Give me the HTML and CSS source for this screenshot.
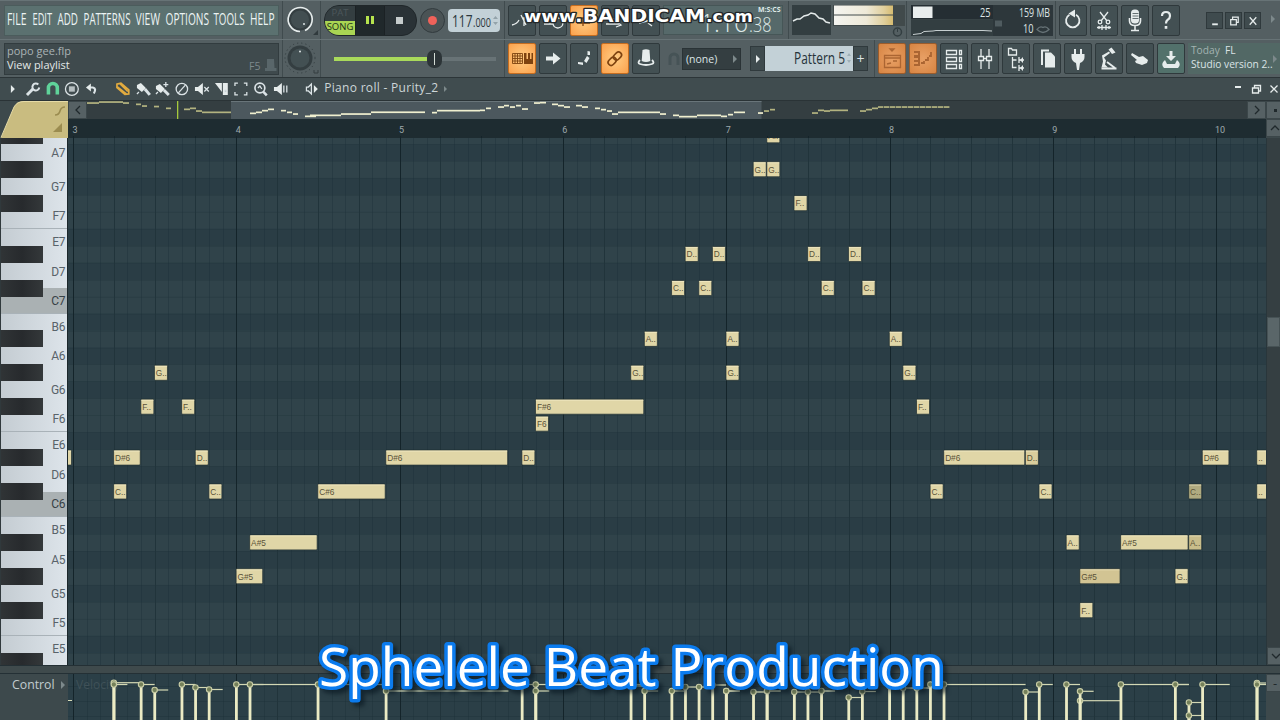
FILE: index.html
```html
<!DOCTYPE html>
<html lang="en">

<head>
    <meta charset="UTF-8">
    <meta name="viewport" content="width=device-width, initial-scale=1.0">
    <title>Piano roll - Purity_2</title>
    <link rel="stylesheet" href="styles.css">
</head>

<body>
    <div class="app">
        <div class="toolbar">
            <div class="bar">
                <div class="cell cell-left">
                    <svg class="menu" width="275" height="31" viewBox="5 4 275 31">
                        <text x="8" y="24" textLength="19.5" lengthAdjust="spacingAndGlyphs">FILE</text>
                        <text x="33.5" y="24" textLength="19.5" lengthAdjust="spacingAndGlyphs">EDIT</text>
                        <text x="58.5" y="24" textLength="20.5" lengthAdjust="spacingAndGlyphs">ADD</text>
                        <text x="84.5" y="24" textLength="47" lengthAdjust="spacingAndGlyphs">PATTERNS</text>
                        <text x="136.5" y="24" textLength="24.5" lengthAdjust="spacingAndGlyphs">VIEW</text>
                        <text x="166.5" y="24" textLength="43.5" lengthAdjust="spacingAndGlyphs">OPTIONS</text>
                        <text x="214.5" y="24" textLength="31" lengthAdjust="spacingAndGlyphs">TOOLS</text>
                        <text x="251" y="24" textLength="24.5" lengthAdjust="spacingAndGlyphs">HELP</text>
                    </svg>
                </div>
                <div class="cell cell-knob">
                    <svg width="36" height="39" viewBox="0 0 36 39">
                        <circle cx="17" cy="18.500" r="10" fill="#424e51" stroke="#343e41" stroke-width="2" />
                        <path d="M17 30.500A12 12 0 1 1 22 29.500" fill="none" stroke="#e6ecec" stroke-width="1.6" />
                        <circle cx="21" cy="23" r="1" fill="#dde4e4" />
                        <path d="M30 34h5v-5z" fill="#303a3d" />
                    </svg>
                </div>
                <div class="cell cell-transport">
                    <div class="transport">
                        <div class="mode"><span>PAT</span><span class="on">SONG</span></div>
                        <div class="pause"><i></i><i></i></div>
                        <div class="stop"><i></i></div>
                    </div>
                    <div class="record"><i></i></div>
                    <svg class="tempo" width="52" height="23" viewBox="0 0 52 23">
                        <text x="4" y="17.5" font-size="17" textLength="20.5" lengthAdjust="spacingAndGlyphs">117</text>
                        <text x="25" y="17.5" font-size="13" textLength="18" lengthAdjust="spacingAndGlyphs">.000</text>
                        <path d="M45 10l2.500-3 2.500 3zM45 13l2.500 3 2.500-3z" fill="#93a3aa" />
                    </svg>
                </div>
                <div class="cell cell-rec">
                    <div class="btn"><svg viewBox="0 0 28 31"><path d="M4 20q5-1 7-5m2-5l5 10M16 12v9" /></svg></div>
                    <div class="btn"><svg viewBox="0 0 28 31"><path d="M5 19h9a5 5 0 1 0 5-6" /></svg></div>
                    <div class="btn lit"><svg viewBox="0 0 28 31"><path d="M7 13h13M7 18h13M13 13v8" /></svg></div>
                    <div class="btn"><svg viewBox="0 0 28 31"><path d="M5 19h13M9 14h8m-2 2l5 4-5 2" /></svg></div>
                    <div class="btn"><svg viewBox="0 0 28 31"><path d="M7 18l12-3m-3 3l4 3" /></svg></div>
                </div>
                <div class="cell cell-time">
                    <svg class="clock" width="120" height="30" viewBox="664 5 120 30">
                        <text x="701" y="32" font-size="26" textLength="48" lengthAdjust="spacingAndGlyphs">1:16</text>
                        <text x="750" y="32" font-size="21" textLength="22.500" lengthAdjust="spacingAndGlyphs">:38</text>
                        <text x="759" y="11.500" font-size="7" font-weight="bold" textLength="22.500" lengthAdjust="spacingAndGlyphs">M:S:CS</text>
                    </svg>
                </div>
                <div class="cell cell-scope">
                    <svg width="116" height="39" viewBox="789 0 116 39">
                        <rect x="792" y="4" width="39" height="30" fill="#333e41" />
                        <path d="M793 20l4-2 3 0 4-3 4-1 3-2 4 1 4 4 4 1 3 3 4 1" fill="none" stroke="#e4eaea" stroke-width="1.500" />
                        <rect x="833" y="4" width="73" height="21" fill="#414a4b" />
                        <rect x="834" y="4.500" width="59" height="9" fill="url(#peak)" />
                        <rect x="834" y="14.500" width="59" height="9.500" fill="url(#peak)" />
                        <circle cx="897.500" cy="31" r="4" fill="none" stroke="#333e41" stroke-width="1.500" />
                        <path d="M897.500 31v-3" stroke="#333e41" />
                        <defs>
                            <linearGradient id="peak">
                                <stop offset="0" stop-color="#f4f4f0" />
                                <stop offset=".55" stop-color="#eee9d8" />
                                <stop offset=".85" stop-color="#e0cf9c" />
                                <stop offset="1" stop-color="#d6bb70" />
                            </linearGradient>
                        </defs>
                    </svg>
                </div>
                <div class="cell cell-cpu">
                    <svg class="cpu" width="142" height="31" viewBox="911 4.500 142 31">
                        <rect x="911" y="4" width="82" height="15" fill="#252e33" />
                        <rect x="911" y="19" width="82" height="17" fill="#333e41" />
                        <rect x="913" y="6" width="19.500" height="11.500" fill="#e9eded" />
                        <rect x="993" y="4" width="60" height="32" fill="#2d373b" />
                        <path d="M913 34l8-1 3-2 9-.5 3-.5h47l9 .5" fill="none" stroke="#c8d0d1" />
                        <rect x="995" y="20" width="7" height="6" fill="#4f5b5f" />
                        <text x="980" y="16.500" textLength="10.500" lengthAdjust="spacingAndGlyphs">25</text>
                        <text x="1019" y="16.500" textLength="31" lengthAdjust="spacingAndGlyphs">159 MB</text>
                        <text x="1023" y="32.500" textLength="10.500" lengthAdjust="spacingAndGlyphs">10</text>
                        <path d="M1037 29q3-4 6-2 3-2 6 2-6 6-12 0z" fill="none" stroke="#667276" stroke-width="1.300" />
                    </svg>
                </div>
                <div class="cell cell-tools">
                    <div class="btn"><svg viewBox="0 0 28 31"><path d="M10.500 9.800a6.700 6.700 0 1 0 6.500 0" style="stroke-width:1.800" /><path class="f" d="M9.500 8.500l6.500-4v8z" /></svg></div>
                    <div class="btn"><svg viewBox="0 0 28 31"><path d="M10 7l7 9M18 7l-7 9M7 22.500h14" /><circle cx="10" cy="17" r="1.800" /><circle cx="18" cy="17" r="1.800" /><path d="M9 21v3m3-4v5m4-5v5m3-4v3" /></svg></div>
                    <div class="btn"><svg viewBox="0 0 28 31"><rect class="f" x="10" y="4.500" width="8" height="14" rx="3.500" /><path d="M8.500 13v3q0 4.500 5.500 4.500t5.500-4.500v-3M14 21v4M10 25.500h8" style="stroke-width:1.600" /><path d="M11.500 8.500h6M11.500 11h6M11.500 13.500h6" style="stroke:#435053;stroke-width:.8" /></svg></div>
                    <div class="btn"><svg viewBox="0 0 28 31"><path d="M10 11q0-4 4-4t4 4q0 2.500-2.500 4-1.500 1-1.500 3.500" style="stroke-width:2.200" /><rect class="f" x="12.700" y="21" width="2.600" height="2.800" /></svg></div>
                </div>
                <div class="winbtns">
                    <div><svg viewBox="0 0 16 17"><path d="M5 12h6" style="stroke-width:2" /></svg></div>
                    <div><svg viewBox="0 0 16 17"><path d="M4.500 7h6v5.500h-6zM6.500 7V4.500h6V10h-2" /></svg></div>
                    <div><svg viewBox="0 0 16 17"><path d="M4.500 4.500l7 8M11.500 4.500l-7 8" /></svg></div>
                </div>
                <i class="tri"></i>
            </div>

            <div class="bar">
                <div class="cell cell-left">
                    <div class="hint">
                        <div>popo gee.flp</div>
                        <div class="hint-now">View playlist</div>
                        <svg class="hint-key" width="34" height="15" viewBox="0 0 34 15">
                            <text x="3" y="12" font-size="10.500">F5</text>
                            <path d="M21 1h7l.5 9h2v3H19v-3h2z" fill="#59666a" />
                        </svg>
                    </div>
                </div>
                <div class="cell cell-knob">
                    <svg width="36" height="38" viewBox="0 0 36 38">
                        <circle cx="17" cy="18" r="15" fill="none" stroke="#353f42" stroke-dasharray="1.200 3" />
                        <circle cx="17" cy="18" r="12.500" fill="#343e41" />
                        <circle cx="17" cy="18" r="9.500" fill="#435053" />
                        <circle cx="17" cy="11.500" r="1" fill="#dde4e4" />
                        <path d="M31 30v3h4v-3" fill="none" stroke="#343e41" />
                    </svg>
                </div>
                <div class="cell cell-transport">
                    <div class="slider"><i class="fill"></i><i class="thumb"></i></div>
                </div>
                <div class="cell cell-rec">
                    <div class="btn lit"><svg viewBox="0 0 28 31"><path d="M4.500 10.500h10v10h-10zM4.500 13h10M4.500 15.500h10M4.500 18h10M7 10.500v10M9.500 10.500v10M12 10.500v10" style="stroke-width:.9" /><path class="f" d="M16 10h2.500v6H20v-6h2v6h1.500v-6H25v11h-9z" /></svg></div>
                    <div class="btn"><svg viewBox="0 0 28 31"><path class="f" d="M7 13.500h7v-4l7.500 6-7.500 6v-4H7z" /></svg></div>
                    <div class="btn"><svg viewBox="0 0 28 31"><path class="f" d="M8 19l5 .5v2.500L8 21zM14 18l3-5 2.500 2-3 5zM17.500 8l2.500.5V12h-2.500z" /></svg></div>
                    <div class="btn lit"><svg viewBox="0 0 28 31"><g transform="rotate(-45 14 15.500)"><rect x="5.500" y="12.500" width="9" height="6" rx="3" style="stroke-width:1.600" /><rect x="13" y="12.500" width="9" height="6" rx="3" style="stroke-width:1.600" /></g></svg></div>
                    <div class="btn"><svg viewBox="0 0 28 31"><path class="f" d="M10.500 7q3.500-1.500 7 0l.8 11q-4.300 2-8.600 0z" /><path d="M8 17q-3 3 0 4 6 2 12 0 3-1 0-4" style="stroke-width:1.800" /></svg></div>
                </div>
                <div class="cell cell-pattern">
                    <svg class="snap-mag" width="12" height="14" viewBox="0 0 12 14"><path d="M2 13V6a4 4 0 0 1 8 0v7" fill="none" stroke="#465356" stroke-width="3" /></svg>
                    <div class="snap">(none)<i class="tri"></i></div>
                    <div class="picker">
                        <div class="pick-side"><i class="tri"></i></div>
                        <svg class="pick-name" width="88" height="25" viewBox="0 0 88 25">
                            <text x="29" y="18" textLength="51" lengthAdjust="spacingAndGlyphs">Pattern 5</text>
                            <path d="M82 10l2-3 2 3zM82 14l2 3 2-3z" fill="#9fb0b7" />
                        </svg>
                        <div class="pick-side">+</div>
                    </div>
                </div>
                <div class="cell cell-views">
                    <div class="btn lit dim"><svg viewBox="0 0 28 31"><path d="M6.500 12.500h16v12h-16zM6.500 15h16M9 21l4-1m2-2h4M12 6h4l-2 2z" /></svg></div>
                    <div class="btn lit dim"><svg viewBox="0 0 28 31"><path class="f" d="M5 8h6v15H5v-2h4v-2H5v-2h4v-2H5v-3h4v-2H5z" /><path d="M12 20h3v-2m1-1h3v-3m1-1h2V9" style="stroke-width:1.800" /></svg></div>
                    <div class="btn"><svg viewBox="0 0 28 31"><path d="M6.500 7.500h10v4h-10zM6.500 14.500h10v4h-10zM6.500 21.500h10v4h-10zM19.500 7.500h2v4h-2zM19.500 14.500h2v4h-2zM19.500 21.500h2v4h-2z" /></svg></div>
                    <div class="btn"><svg viewBox="0 0 28 31"><path d="M10 6v7M10 18v8M18 6v7M18 18v8M7.500 13.500h5v4h-5zM15.500 13.500h5v4h-5zM12.500 15.500h3" /></svg></div>
                    <div class="btn"><svg viewBox="0 0 28 31"><path d="M6.500 5.500h3l1 1.500h4v5h-8zM10.500 14v10.500h4M10.500 17h4M17 14v6m0 2v6M17 17h5M17 25h5" /><path class="f" d="M18 17l3-3v6zM18 25l3-3v6z" /></svg></div>
                    <div class="btn"><svg viewBox="0 0 28 31"><path class="f" d="M12 9.500h6l4 4v11H12z" /><path d="M9 22V7.500h7" style="stroke-width:2" /></svg></div>
                    <div class="btn"><svg viewBox="0 0 28 31"><path class="f" d="M10 6h2v5h4V6h2v5h2.500v3q0 4-4.500 6l-1 7h-2l-1-7q-4.500-2-4.500-6v-3H10z" /></svg></div>
                    <div class="btn"><svg viewBox="0 0 28 31"><path class="f" d="M13.500 6.500l3-2 4 5-3.500 1.500zM7 12.500l7-4 1 1.500-6 4.500 2 3-1 4 3 3H6.500l1.500-6z" /><path d="M6.500 25.500h15M12 19l8 6" style="stroke-width:1.800" /></svg></div>
                    <div class="btn"><svg viewBox="0 0 28 31"><path class="f" d="M6 10l7 4 4-1 5 4-1 3-5 2-6-2-1-2 2-1-6-5z" /></svg></div>
                    <div class="btn teal"><svg viewBox="0 0 28 31"><path class="f" d="M12.500 8h3v5H19l-5 5-5-5h3.500zM8 17l2 4h8l2-4q5 4 1 8H7q-4-4 1-8z" /></svg></div>
                </div>
                <div class="news">
                    <div><span>Today</span>&nbsp; FL</div>
                    <div>Studio version 2..</div>
                    <i class="tri"></i>
                </div>
            </div>
        </div>

        <div class="titlebar">
            <svg viewBox="0 0 20 20"><path class="f" d="M8 6l4 4-4 4z" /></svg>
            <svg viewBox="0 0 20 20"><path d="M4 16l6-6" style="stroke-width:3" /><path d="M15.500 5.500a3.500 3.500 0 1 0 1 3" style="stroke-width:2" /></svg>
            <svg viewBox="0 0 20 20" class="green"><path d="M5.500 15.500V9a4.500 4.500 0 0 1 9 0v6.500" style="stroke-width:3.600" /></svg>
            <svg viewBox="0 0 20 20"><circle cx="10" cy="10" r="6.500" /><path d="M7 8h6M7 10h6M7 12h6" /></svg>
            <svg viewBox="0 0 20 20"><path d="M8 8.500h3q4 1 1 6" style="stroke-width:2.200" /><path class="f" d="M4 8.500l5-4v8z" /></svg>
            <svg viewBox="0 0 20 20" class="amber first"><path d="M4 5l4-1 8 7v4l-4 .5-8-7zM7 4.500l8 8M4.500 8l9 7" style="stroke-width:1.700" /></svg>
            <svg viewBox="0 0 20 20"><path class="f" d="M4 6l4-2 5 5-4 4-5-4z" /><path d="M12 10l5 6" style="stroke-width:3" /><path d="M4 15l2-2" /></svg>
            <svg viewBox="0 0 20 20"><path class="f" d="M4 7l4-2 5 5-4 4-5-4z" /><path d="M12 11l5 5" style="stroke-width:3" /><path d="M14 3v5M11.500 5.500h5M4 15l2-2" /></svg>
            <svg viewBox="0 0 20 20"><circle cx="10" cy="10" r="5.800" /><path d="M6.500 14l7-8" /></svg>
            <svg viewBox="0 0 20 20"><path class="f" d="M3 8h3l5-4v12l-5-4H3z" /><path d="M12.500 8l4.500 4.500m0-4.500l-4.500 4.500" /></svg>
            <svg viewBox="0 0 20 20"><path class="f" d="M3 4h7v9zM11 4h5v12h-5z" /><circle cx="13.500" cy="12" r="1" fill="#3d494c" /></svg>
            <svg viewBox="0 0 20 20"><path d="M4 7V4h3M13 4h3v3M16 13v3h-3M7 16H4v-3" /></svg>
            <svg viewBox="0 0 20 20"><circle cx="9" cy="9" r="5" style="stroke-width:1.700" /><path d="M12.500 13l3.500 3.500" style="stroke-width:2.600" /><path d="M7 9l2-2 2 3" /></svg>
            <svg viewBox="0 0 20 20"><path class="f" d="M3 8h3l5-4v12l-5-4H3z" /><path d="M13 6.500v7M16 6.500v7" /></svg>
            <svg viewBox="0 0 20 20" class="speaker"><path d="M4.500 8h2l3-3v10l-3-3h-2z" /><path class="f" d="M12 6l4 4-4 4z" /></svg>
            <span class="title">Piano roll - Purity_2</span>
            <i class="tri"></i>
            <div class="title-win">
                <svg viewBox="0 0 16 16"><path d="M5 6h6" style="stroke-width:2" /></svg>
                <svg viewBox="0 0 16 16"><path d="M4.500 7h6v5h-6zM6.500 7V4.500h6V10h-2" /></svg>
                <svg viewBox="0 0 16 16"><path d="M4.500 4.500l7 7M11.500 4.500l-7 7" /></svg>
            </div>
        </div>

        <div class="roll">
            <div class="corner">
                <svg width="68" height="37" viewBox="0 0 68 37">
                    <path d="M1 37Q8 20 14 6 17 0 24 0H68V37z" fill="#c9bc80" />
                    <path d="M1 36.500Q8 20 14 6 17 .5 24 .5H68" fill="none" stroke="#e6dba6" />
                    <path d="M55 14q4 0 5-4t5-4" fill="none" stroke="#9b8c50" stroke-width="1.600" />
                    <path d="M53 31h9v-9z" fill="#9b8c50" />
                </svg>
            </div>
            <div class="overview">
                <div class="sq"><svg width="8" height="12" viewBox="0 0 8 12"><path d="M6 2L2 6l4 4" /></svg></div>
                <svg id="minimap" width="1160" height="18" viewBox="87 101 1160 18"></svg>
                <div class="sq"><svg width="8" height="12" viewBox="0 0 8 12"><path d="M2 2l4 4-4 4" /></svg></div>
            </div>
            <div class="sq"><i class="dot"></i></div>
            <svg id="ruler" width="1198" height="19" viewBox="68 119 1198 19"></svg>
            <div class="sq"><svg width="12" height="10" viewBox="0 0 12 10"><path d="M2 7l4-4 4 4" /></svg></div>
            <div class="keys" id="keys"></div>
            <svg id="grid" width="1198" height="527" viewBox="68 138 1198 527"></svg>
            <div class="vscroll">
                <div class="vthumb"></div>
                <div class="sq"><svg width="12" height="10" viewBox="0 0 12 10"><path d="M2 3l4 4 4-4" /></svg></div>
            </div>
            <div class="splitter"></div>
            <div class="control">Control<i class="tri"></i></div>
            <svg id="velocity" width="1198" height="46" viewBox="68 674 1198 46"></svg>
            <div class="sq">-</div>
        </div>

        <svg class="watermark" width="240" height="26" viewBox="518 3 240 26">
            <text x="524" y="21.500" font-size="16" textLength="52" lengthAdjust="spacingAndGlyphs">www</text>
            <text x="575" y="22" font-size="17.500" textLength="130" lengthAdjust="spacingAndGlyphs">.BANDICAM</text>
            <text x="706" y="22" font-size="15" textLength="47" lengthAdjust="spacingAndGlyphs">.com</text>
        </svg>
        <svg class="caption" width="660" height="86" viewBox="300 634 660 86">
            <text x="319" y="685.500" textLength="625" lengthAdjust="spacingAndGlyphs">Sphelele Beat Production</text>
        </svg>
    </div>

    <script src="script.js"></script>
</body>

</html>
```
FILE: styles.css
```css
* {
    margin: 0;
    padding: 0;
    box-sizing: border-box;
}

body {
    width: 1280px;
    height: 720px;
    overflow: hidden;
    background: #3d494c;
    font-family: 'Open Sans', 'Noto Sans', sans-serif;
    color: #dbe4e5;
}

svg {
    display: block;
}

.app {
    position: relative;
    width: 1280px;
    height: 720px;
    overflow: hidden;
}

/* top toolbar */
.toolbar {
    height: 78px;
    background: #545f62;
    border-bottom: 1px solid #2c3538;
}

.bar {
    display: flex;
    height: 39px;
    border-top: 1px solid #677376;
}

.bar + .bar {
    height: 38px;
}

.cell {
    display: flex;
    align-items: center;
    flex: none;
    border-right: 1px solid #404b4e;
}

.cell-left {
    width: 283px;
    padding-left: 4px;
}

.cell-knob {
    width: 38px;
}

.cell-transport {
    width: 184px;
    padding-left: 3px;
}

.cell-rec {
    width: 157px;
    padding-left: 3px;
    gap: 3px;
    border-right: none;
}

.cell-time {
    width: 127px;
    padding-left: 1px;
}

.cell-scope {
    width: 118px;
}

.cell-cpu {
    width: 149px;
    padding-left: 4px;
}

.cell-tools {
    width: 128px;
    padding-left: 3px;
    gap: 3px;
    border-right: none;
}

.cell-pattern {
    width: 213px;
    padding-left: 5px;
}

.cell-views {
    width: 313px;
    padding-left: 3px;
    gap: 3px;
    border-right: none;
}

.menu {
    background: #5b7170;
    outline: 1px solid #4b5c5c;
    outline-offset: -1px;
    fill: #ecf4f4;
    font-size: 15.5px;
}

.hint {
    position: relative;
    width: 275px;
    height: 32px;
    padding: 0 2px;
    background: #3f4a4d;
    border: 1px solid #323c3f;
    font-size: 11px;
    line-height: 14px;
    color: #aab3b5;
}

.hint-now {
    color: #e2e8e8;
}

.hint-key {
    position: absolute;
    right: -2px;
    bottom: 1px;
    fill: #7d898c;
}

.transport {
    display: flex;
    width: 93px;
    height: 31px;
    border-radius: 15px;
    overflow: hidden;
    background: #2a3236;
    border: 1px solid #20272a;
}

.mode {
    width: 30px;
    display: flex;
    flex-direction: column;
    font-size: 9.5px;
    text-align: center;
    line-height: 14px;
    color: #4c575b;
    background: #343e41;
}

.mode .on {
    flex: 1;
    margin-top: 1px;
    line-height: 12px;
    background: #a9d553;
    color: #20301a;
}

.pause,
.stop {
    width: 30px;
    display: flex;
    align-items: center;
    justify-content: center;
    gap: 2px;
    border-left: 1px solid #1b2124;
}

.pause {
    width: 29px;
    background: #20282b;
}

.pause i {
    width: 3px;
    height: 8px;
    background: #b6e34e;
}

.stop i {
    width: 7px;
    height: 7px;
    background: #c6cccc;
}

.record {
    width: 25px;
    height: 25px;
    margin: 0 3px;
    display: flex;
    align-items: center;
    justify-content: center;
    border-radius: 50%;
    background: #4a5355;
    border: 1px solid #323b3e;
}

.record i {
    width: 9px;
    height: 9px;
    border-radius: 50%;
    background: #f0625a;
}

.tempo {
    background: #c3d1d7;
    border-radius: 4px;
    fill: #2b383d;
}

.slider {
    position: relative;
    width: 162px;
    height: 4px;
    margin-left: 10px;
    background: #687376;
}

.slider .fill {
    display: block;
    width: 98px;
    height: 4px;
    background: #a9da5b;
}

.slider .thumb {
    position: absolute;
    left: 93px;
    top: -7px;
    width: 15px;
    height: 18px;
    border-radius: 7px;
    background: linear-gradient(90deg, #2c3437 45%, #d3dcd5 45%, #d3dcd5 55%, #2c3437 55%);
    border: 3px solid #2c3437;
}

.btn {
    width: 28px;
    height: 31px;
    background: #435053;
    border: 1px solid #2f393c;
    border-radius: 2px;
}

.btn svg {
    width: 28px;
    height: 31px;
    margin: -1px;
    fill: none;
    stroke: #e6ecec;
    stroke-width: 1.3;
}

.btn .f,
.titlebar .f {
    fill: #e6ecec;
    stroke: none;
}

.btn.lit {
    background: radial-gradient(#ffce85, #fba14c);
    border-color: #c56d20;
}

.btn.lit svg {
    stroke: #7e4310;
}

.btn.lit .f {
    fill: #7e4310;
}

.btn.lit.dim {
    background: radial-gradient(#e8a065, #d78442);
    border-color: #9b5c2c;
}

.btn.lit.dim svg {
    stroke: #ab6532;
}

.btn.lit.dim .f {
    fill: #ab6532;
}

.btn.teal {
    background: #52716b;
}

.clock {
    background: #56696a;
    outline: 1px solid #465657;
    outline-offset: -1px;
    fill: #dfeae8;
    font-weight: 300;
}

.cpu > text {
    fill: #dde4e5;
    font-size: 13px;
}

.winbtns {
    display: flex;
    align-items: center;
    gap: 2px;
    margin-left: 22px;
}

.winbtns div {
    width: 17px;
    height: 17px;
    background: #3f4b4e;
    border: 1px solid #2f393c;
}

.winbtns svg,
.title-win svg {
    width: 16px;
    height: 16px;
    fill: none;
    stroke: #e6ecec;
    stroke-width: 1.3;
}

.tri {
    display: inline-block;
    flex: none;
    width: 0;
    height: 0;
    border: 4px solid transparent;
    border-left: 4px solid #7d898b;
    border-right: none;
}

.winbtns + .tri {
    margin: 14px 0 0 10px;
}

.snap-mag {
    margin-left: 1px;
}

.snap {
    display: flex;
    justify-content: space-between;
    align-items: center;
    width: 59px;
    height: 22px;
    margin-left: 2px;
    padding: 0 3px;
    background: #343e41;
    border: 1px solid #2a3336;
    font-size: 10.5px;
}

.picker {
    display: flex;
    align-items: center;
    height: 25px;
    margin-left: 9px;
}

.pick-side {
    display: flex;
    align-items: center;
    justify-content: center;
    width: 15px;
    height: 25px;
    background: #3f4b4e;
    border: 1px solid #303a3d;
    font-size: 14px;
}

.pick-side .tri {
    border-left-color: #e6ecec;
}

.pick-name {
    background: #c3d1d7;
    fill: #26333a;
    font-size: 16.5px;
}

.news {
    position: relative;
    flex: 1;
    height: 31px;
    margin-top: 3px;
    padding: 0 3px;
    background: #526865;
    font-size: 10.2px;
    line-height: 14px;
    white-space: nowrap;
}

.news span {
    color: #a3b3b1;
}

.news .tri {
    position: absolute;
    right: 3px;
    top: 12px;
}

/* window title row */
.titlebar {
    display: flex;
    align-items: center;
    height: 23px;
    padding-left: 3px;
    background: #404c4f;
    border-bottom: 1px solid #2a3336;
}

.titlebar > svg {
    flex: none;
    width: 19.75px;
    height: 20px;
    fill: none;
    stroke: #dbe3e6;
    stroke-width: 1.3;
}

.titlebar > .first {
    margin-left: 11px;
}

.titlebar > .speaker {
    margin-left: 11px;
}

.titlebar > .green {
    stroke: #5fd39a;
}

.titlebar > .amber {
    stroke: #e2ab3f;
}

.title {
    margin: -3px 6px 0 3px;
    font-size: 12px;
    letter-spacing: 0.3px;
    color: #cdd6d8;
    white-space: nowrap;
}

.titlebar .tri {
    border-width: 3px;
}

.title-win {
    display: flex;
    gap: 2px;
    margin-left: auto;
    margin-right: -2px;
}

/* piano roll */
.roll {
    display: grid;
    grid-template-columns: 68px 1198px 14px;
    grid-template-rows: 18px 19px 527px 9px 46px;
}

.corner {
    grid-row: span 2;
}

.overview {
    display: flex;
    width: 1198px;
    background: #343e41;
}

.overview > svg {
    flex: none;
}

.sq {
    flex: none;
    display: flex;
    align-items: center;
    justify-content: center;
    width: 19px;
    height: 18px;
    background: #566164;
    border: 1px solid #3b4649;
    color: #20292c;
    font-size: 13px;
    line-height: 12px;
}

.roll > .sq,
.vscroll .sq {
    width: 18px;
}

.sq svg {
    fill: none;
    stroke: #20292c;
    stroke-width: 1.3;
}

.sq .dot {
    width: 3px;
    height: 3px;
    background: #20292c;
}

#ruler {
    background: #1e2c31;
}

#ruler text {
    fill: #9eaaad;
    font-family: 'Roboto', sans-serif;
    font-size: 9px;
    text-anchor: middle;
}

.keys {
    height: 527px;
    overflow: hidden;
    border-left: 1px solid #30393c;
    border-right: 1px solid #1c272b;
    background: #d3dbe1;
}

.key {
    position: relative;
    height: 33.9px;
    display: flex;
    align-items: center;
    justify-content: flex-end;
    padding: 1px 2px 0 0;
    font-family: 'Roboto', sans-serif;
    font-size: 12px;
    letter-spacing: -0.4px;
    color: #59636a;
    background: linear-gradient(90deg, #c4ccd2, #dde4ea);
}

.key.short {
    height: 25.45px;
}

.key:first-child {
    margin-top: -27.9px;
}

.key.edge {
    border-bottom: 1px solid #a9b2b8;
}

.key.c {
    background: #aab1b3;
    color: #374146;
}

/* black key straddles the seam with the next white key */
.key.sharp::after {
    content: '';
    position: absolute;
    z-index: 1;
    left: 0;
    bottom: -8.5px;
    width: 42px;
    height: 17px;
    background: linear-gradient(90deg, #303436, #272a2d 50%, #34383a);
}

#grid,
#velocity {
    background: #2b3f47;
}

#grid text {
    font-family: 'Liberation Sans', sans-serif;
    font-size: 8.3px;
    fill: #5a5237;
}

.vscroll {
    display: flex;
    flex-direction: column;
    justify-content: space-between;
    background: #353f42;
    border-left: 1px solid #29363b;
}

.vthumb {
    height: 30px;
    margin-top: 179px;
    background: #5a6669;
    border: 1px solid #465255;
}

.splitter {
    grid-column: 1 / 4;
    background: #3f4a4c;
    border-top: 1px solid #243035;
    border-bottom: 1px solid #243035;
}

.control {
    display: flex;
    align-items: center;
    justify-content: space-between;
    height: 21px;
    padding: 0 3px 0 12px;
    font-size: 12.3px;
    color: #c2cccf;
}

#velocity text {
    fill: #3f5158;
    font-size: 12px;
}

/* overlays */
.watermark {
    position: absolute;
    left: 518px;
    top: 3px;
    font-family: 'DejaVu Sans', sans-serif;
    font-weight: bold;
    fill: #fff;
    stroke: #23282a;
    stroke-width: 2.6px;
    stroke-linejoin: round;
    paint-order: stroke;
}

.caption {
    position: absolute;
    left: 300px;
    top: 634px;
    font-size: 53px;
    fill: #fff;
    stroke: #0b7bee;
    stroke-width: 7px;
    stroke-linejoin: round;
    paint-order: stroke;
    filter: drop-shadow(4px 4px 2px rgba(5, 20, 30, 0.6));
}
```
FILE: script.js
```js
const BAR = 163.3;
const STEP = BAR / 12;
const BAR3 = 73;
const ROW = 16.96;
const TOP = 144; // top edge of A7

const names = ['C', 'C#', 'D', 'D#', 'E', 'F', 'F#', 'G', 'G#', 'A', 'A#', 'B'];

// step, length, note, velocity y, shade
const notes = [
    [-2, 1.95, 'D#6', 700], [3, 2, 'D#6', 682.7], [3, 1, 'C#6', 684.5], [5, 1, 'F#6', 684.5],
    [6, 1, 'G#6', 690], [8, 1, 'F#6', 684.5], [9, 1, 'D#6', 687.5], [10, 1, 'C#6', 689.5],
    [12, 2, 'G#5', 684.5], [13, 5, 'A#5', 684.5], [18, 5, 'C#6', 684.5], [23, 9, 'D#6', 691],
    [33, 1, 'D#6', 684.5], [34, 8, 'F#6', 684.5], [34, 1, 'F6', 691], [41, 1, 'G#6', 686],
    [42, 1, 'A#6', 691], [44, 1, 'C#7', 691], [45, 1, 'D#7', 687], [46, 1, 'C#7', 687],
    [47, 1, 'D#7', 685], [48, 1, 'A#6', 691], [48, 1, 'G#6', 691], [50, 1, 'G#7', 692],
    [51, 1, 'G#7', 691], [51, 1, 'A#7', 691], [53, 1, 'F#7', 692], [54, 1, 'D#7', 692],
    [55, 1, 'C#7', 691], [57, 1, 'D#7', 697.5], [58, 1, 'C#7', 691.5], [60, 1, 'A#6', 686],
    [61, 1, 'G#6', 688], [62, 1, 'F#6', 688], [63, 1, 'C#6', 684.5], [64, 6, 'D#6', 684.5],
    [70, 1, 'D#6', 692, '#d9cd9c'], [71, 1, 'C#6', 684.5], [73, 1, 'A#5', 684.5],
    [74, 3, 'G#5', 700.7, '#d2c493'], [74, 1, 'F#5', 691.3], [77, 5, 'A#5', 684.5],
    [81, 1, 'G#5', 684.5], [82, 1, 'A#5', 702.5, '#c9bd8b'], [82, 1, 'C#6', 715.5, '#b0aa80'],
    [83, 2, 'D#6', 684.5], [87, 1, 'D#6', 683], [87, 1, 'C#6', 684.5]
];

// x1, x2, y of each overview dash
const dashes = [
    [87, 99, 103], [99, 123, 102], [123, 129, 103], [136, 141, 104.3], [142, 147, 106], [154, 159, 106.5],
    [166, 171, 108.3], [184, 190, 109.3], [190, 196, 108.3], [196, 202, 111], [202, 231, 112.3],
    [250, 256, 113.3], [256, 262, 112.3], [262, 268, 110.6], [268, 274, 109.3], [281, 286, 110.6],
    [287, 292, 112.3], [293, 298, 114], [305, 316, 116.3], [310, 341, 115.3], [341, 371, 114],
    [371, 425, 112.2], [432, 437, 112.6], [437, 480, 110.6], [480, 485, 110.3], [486, 491, 108.3],
    [498, 504, 107], [504, 509, 105.6], [510, 515, 107], [516, 521, 105.6], [522, 528, 109],
    [534, 540, 103], [540, 546, 102.6], [552, 558, 104.3], [558, 564, 105.6], [564, 570, 107],
    [576, 582, 105.6], [582, 588, 107], [595, 600, 108.3], [601, 606, 109.6], [607, 612, 111],
    [612, 618, 114], [618, 660, 112.3], [660, 666, 114], [673, 679, 115.3], [679, 697, 116.6],
    [697, 721, 115.3], [721, 727, 116.3], [728, 733, 114.6], [734, 745, 112.3], [758, 763, 113],
    [764, 769, 111], [770, 775, 109.6], [812, 818, 113], [818, 824, 110.3], [824, 830, 111],
    [830, 836, 110.3], [836, 842, 110.3], [842, 848, 110.3], [860, 866, 111], [866, 872, 109.6],
    [872, 878, 108.3]
];
for (let x = 878; x < 949; x += 6) {
    dashes.push([x, x + 5.4, 107]);
}

function rowTop(note) {
    const octave = Number(note.slice(-1));
    const semi = octave * 12 + names.indexOf(note.slice(0, -1));
    return TOP + (7 * 12 + 9 - semi) * ROW;
}

function rect(x, y, w, h, fill, extra = '') {
    return `<rect x="${x}" y="${y}" width="${w}" height="${h}" fill="${fill}" ${extra}/>`;
}

function verticals(y, h) {
    let out = '';
    for (let s = 0; s < 88; s++) {
        const x = Math.round(BAR3 + s * STEP);
        if (s % 12 === 0) out += rect(x, y, 1, h, '#14242a');
        else if (s % 3 === 0) out += rect(x, y, 1, h, '#21343b');
        else out += rect(x, y, 1, h, '#1b2f37', 'opacity=".35"');
    }
    return out;
}

function drawGrid() {
    let out = '';
    for (let i = -1; i < 31; i++) {
        const name = names[(9 - i + 48) % 12];
        const light = name.length > 1 || name === 'F' || name === 'C';
        const y = TOP + i * ROW;
        out += rect(68, y, 1198, ROW + 0.1, light ? '#30434a' : '#2a3d45');
        out += rect(68, Math.round(y), 1198, 1, '#20343b', 'opacity=".3"');
    }
    out += verticals(138, 527);
    for (const [step, len, note, vel, shade] of notes) {
        const x = BAR3 + step * STEP - 0.2;
        const y = rowTop(note) + 0.8;
        out += rect(x, y, len * STEP - 0.6, 15, shade || '#e0d6a7', 'rx="1" stroke="#1c2b2e" stroke-width=".7"');
        out += rect(x + 0.5, y + 0.5, len * STEP - 1.6, 1, '#f3ecc8', 'opacity=".7"');
        let label = len > 1 || note === 'F6' ? note : note[0] + '..';
        if (step === 87) label = '..';
        if (step > 0) out += `<text x="${x + 1.4}" y="${y + 10.8}">${label}</text>`;
    }
    document.getElementById('grid').innerHTML = out;
}

function drawVelocity() {
    let out = '';
    for (let y = 686; y < 720; y += 15) {
        out += rect(68, y, 1198, 1, '#20343b', 'opacity=".5"');
    }
    out += verticals(674, 46);
    out += '<text x="76" y="689">Velocity</text>';
    out += rect(68, 700, 4, 1, '#d8dcb8');
    for (const [step, len, , vel] of notes) {
        if (step < 0) continue;
        const x = BAR3 + step * STEP;
        out += rect(x, vel - 0.6, len * STEP, 1.2, '#d3d8b4');
        out += rect(x - 1.3, vel, 2.8, 60, '#ebebc4');
        out += `<circle cx="${x}" cy="${vel}" r="2.7" fill="#74805a" stroke="#c9cda6" stroke-width="1.1"/>`;
    }
    document.getElementById('velocity').innerHTML = out;
}

function drawRuler() {
    let out = '';
    for (let bar = 3; bar <= 10; bar++) {
        const x = BAR3 + (bar - 3) * BAR + 2;
        out += `<text x="${bar === 10 ? x + 2 : x}" y="133">${bar}</text>`;
    }
    for (let s = 0; s < 88; s += 3) {
        out += rect(Math.round(BAR3 + s * STEP), 136, 1, 2, '#14242a');
    }
    document.getElementById('ruler').innerHTML = out;
}

function drawMinimap() {
    let out = rect(231, 101, 530.5, 18, '#4c585e');
    out += rect(231, 101, 530.5, 1, '#69757a');
    for (const [x1, x2, y] of dashes) {
        const inView = x1 > 231 && x1 < 761;
        out += rect(x1, y - 0.8, x2 - x1, 1.7, inView ? '#f0efcf' : '#b3b380');
    }
    out += rect(177, 101, 1.3, 18, '#a6c93c');
    document.getElementById('minimap').innerHTML = out;
}

function drawKeys() {
    let out = '';
    for (let octave = 7; octave >= 5; octave--) {
        for (const n of ['B', 'A', 'G', 'F', 'E', 'D', 'C']) {
            const cls = ['key'];
            if ('BFEC'.includes(n)) cls.push('short');
            if ('BAGED'.includes(n)) cls.push('sharp');
            if ('FC'.includes(n)) cls.push('edge');
            if (n === 'C') cls.push('c');
            out += `<div class="${cls.join(' ')}">${n}${octave}</div>`;
        }
    }
    document.getElementById('keys').innerHTML = out;
}

drawKeys();
drawGrid();
drawVelocity();
drawRuler();
drawMinimap();
```
